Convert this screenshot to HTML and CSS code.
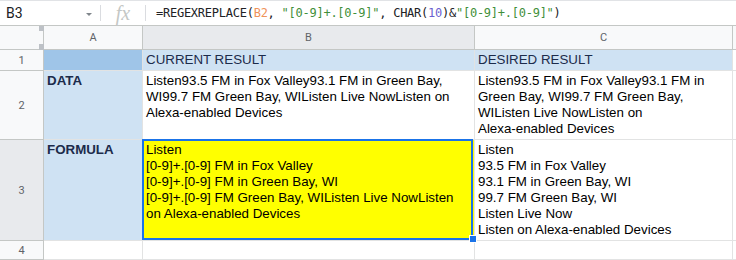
FILE: index.html
```html
<!DOCTYPE html>
<html>
<head>
<meta charset="utf-8">
<link rel="stylesheet" href="styles.css">
</head>
<body>
<div class="fbar">
  <div class="namebox"><span class="ref">B3</span><span class="caret"></span></div>
  <div class="sep"></div>
  <div class="fx">fx</div>
  <div class="sep"></div>
  <div class="formula">=REGEXREPLACE(<span class="f-ref">B2</span>, <span class="f-str">"[0-9]+.[0-9]"</span>, CHAR(<span class="f-num">10</span>)&amp;<span class="f-str">"[0-9]+.[0-9]"</span>)</div>
</div>
<div class="sheet">
  <div class="hd corner"></div>
  <div class="hd col">A</div>
  <div class="hd col hd-sel">B</div>
  <div class="hd col">C</div>
  <div class="hd col"></div>

  <div class="hd row">1</div>
  <div class="cell blue-dark"></div>
  <div class="cell blue title">CURRENT RESULT</div>
  <div class="cell blue title">DESIRED RESULT</div>
  <div class="cell"></div>

  <div class="hd row">2</div>
  <div class="cell blue label">DATA</div>
  <div class="cell">Listen93.5 FM in Fox Valley93.1 FM in Green Bay,<br>WI99.7 FM Green Bay, WIListen Live NowListen on<br>Alexa-enabled Devices</div>
  <div class="cell">Listen93.5 FM in Fox Valley93.1 FM in<br>Green Bay, WI99.7 FM Green Bay,<br>WIListen Live NowListen on<br>Alexa-enabled Devices</div>
  <div class="cell"></div>

  <div class="hd row hd-sel">3</div>
  <div class="cell blue label">FORMULA</div>
  <div class="cell yellow sel">Listen<br>[0-9]+.[0-9] FM in Fox Valley<br>[0-9]+.[0-9] FM in Green Bay, WI<br>[0-9]+.[0-9] FM Green Bay, WIListen Live NowListen<br>on Alexa-enabled Devices<span class="handle"></span></div>
  <div class="cell">Listen<br>93.5 FM in Fox Valley<br>93.1 FM in Green Bay, WI<br>99.7 FM Green Bay, WI<br>Listen Live Now<br>Listen on Alexa-enabled Devices</div>
  <div class="cell"></div>

  <div class="hd row">4</div>
  <div class="cell"></div>
  <div class="cell"></div>
  <div class="cell"></div>
  <div class="cell"></div>
</div>
</body>
</html>
```
FILE: styles.css
```css
* { box-sizing: border-box; }
html, body { margin: 0; padding: 0; background: #fff; }
body { width: 736px; height: 260px; overflow: hidden; font-family: "Liberation Sans", Arial, sans-serif; }

.fbar {
  height: 26px;
  border-top: 1px solid #e1e3e6;
  border-bottom: 1px solid #c4c7c5;
  display: flex;
  align-items: center;
  background: #fff;
}
.namebox {
  width: 100px;
  height: 100%;
  display: flex;
  align-items: center;
  justify-content: space-between;
  padding: 0 8px 0 6px;
}
.ref { font-family: Roboto, "Liberation Sans", sans-serif; font-size: 14px; color: #202124; }
.caret {
  width: 0; height: 0;
  border-left: 3px solid transparent;
  border-right: 3px solid transparent;
  border-top: 3px solid #80868b;
  margin-top: 2px;
}
.sep { width: 1px; height: 16px; background: #dadce0; }
.fx {
  width: 44px;
  text-align: center;
  font-family: "Liberation Serif", serif;
  font-style: italic;
  font-size: 20px;
  color: #c4c7c5;
  line-height: 24px;
}
.formula {
  padding-left: 10px;
  font-family: "DejaVu Sans Mono", monospace;
  font-size: 12px;
  letter-spacing: -0.25px;
  color: #202124;
  white-space: nowrap;
}
.f-ref { color: #f0935a; }
.f-str { color: #3f8f3a; }
.f-num { color: #6b5fd0; }

.sheet {
  display: grid;
  grid-template-columns: 44px 99px 332px 258px 1fr;
  grid-template-rows: 24px 21px 69px 101px 1fr;
  height: 234px;
}
.hd {
  background: #f8f9fa;
  border-right: 1px solid #c4c7c5;
  border-bottom: 1px solid #c4c7c5;
  color: #5f6368;
  font-family: Roboto, "Liberation Sans", sans-serif;
  font-size: 11px;
  display: flex;
  align-items: center;
  justify-content: center;
}
.hd-sel { background: #e8eaed; }
.corner { position: relative; }
.corner::before {
  content: "";
  position: absolute;
  right: -1px; top: 0;
  width: 5px; height: 5px;
  background: #bdc1c6;
}
.corner::after {
  content: "";
  position: absolute;
  right: -1px; bottom: -1px;
  width: 5px; height: 6px;
  background: #bdc1c6;
}
.cell {
  border-right: 1px solid #e2e3e3;
  border-bottom: 1px solid #e2e3e3;
  padding: 2px 3px;
  font-size: 13.333px;
  line-height: 16px;
  color: #000;
  white-space: nowrap;
  overflow: visible;
}
.blue { background: #cfe2f3; }
.blue-dark { background: #9fc5e8; }
.yellow { background: #ffff00; }
.title { color: #1c2b4b; }
.label { color: #1c2b4b; font-weight: bold; }
.sel { position: relative; }
.sel::after {
  content: "";
  position: absolute;
  left: -1px; top: -1px; right: 1px; bottom: 0;
  border: 2px solid #1a73e8;
  pointer-events: none;
}
.handle {
  position: absolute;
  right: -3px; bottom: -3px;
  width: 8px; height: 8px;
  background: #1a73e8;
  border: 1px solid #fff;
  z-index: 2;
}
```
